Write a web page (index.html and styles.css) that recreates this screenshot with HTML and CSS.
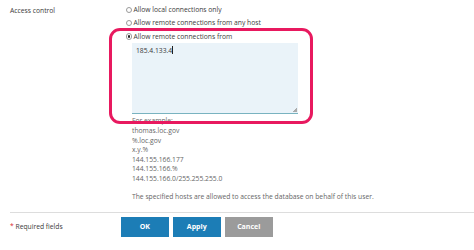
FILE: index.html
```html
<!DOCTYPE html>
<html lang="en">
<head>
  <meta charset="UTF-8" />
  <title>Access control</title>
  <link rel="stylesheet" href="styles.css">
</head>
<body>
  <div class="form">
    <div class="form-row">
      <div class="form-label">Access control</div>
      <div class="form-field">
        <label class="radio"><span class="dot"></span>Allow local connections only</label>
        <label class="radio"><span class="dot"></span>Allow remote connections from any host</label>
        <label class="radio"><span class="dot checked"></span>Allow remote connections from</label>
        <div class="hosts">
          <div class="textarea">185.4.133.4<span class="caret"></span><span class="grip"></span></div>
          <div class="hint">
            <p class="example-title">For example:</p>
            <p>thomas.loc.gov</p>
            <p>%.loc.gov</p>
            <p>x.y.%</p>
            <p>144.155.166.177</p>
            <p>144.155.166.%</p>
            <p>144.155.166.0/255.255.255.0</p>
          </div>
          <p class="note">The specified hosts are allowed to access the database on behalf of this user.</p>
        </div>
        <div class="highlight"></div>
      </div>
    </div>

    <div class="form-footer">
      <div class="required"><span class="star">*</span> Required fields</div>
      <div class="buttons">
        <button class="btn btn-primary">OK</button>
        <button class="btn btn-primary">Apply</button>
        <button class="btn btn-cancel">Cancel</button>
      </div>
    </div>
  </div>
</body>
</html>
```

FILE: styles.css
```css
* {
  margin: 0;
  padding: 0;
  box-sizing: border-box;
}

body {
  font-family: 'Open Sans', 'Liberation Sans', sans-serif;
  font-size: 6.75px;
  color: #3a3a3a;
  background: #fff;
  width: 474px;
  height: 250px;
  overflow: hidden;
}

.form {
  padding: 3.5px 0 0 10px;
}

/* Linha do formulario */
.form-row {
  display: grid;
  grid-template-columns: 112px 1fr;
}

.form-label {
  line-height: 13px;
}

.form-field {
  position: relative;
}

.radio {
  display: flex;
  align-items: center;
  gap: 1.5px;
  height: 13px;
  line-height: 10px;
}

.radio:nth-child(3) {
  position: relative;
  top: 0.5px;
}

.dot {
  width: 6.5px;
  height: 6.5px;
  margin-left: 3.5px;
  border: 1px solid #9a9a9a;
  border-radius: 50%;
  background: #fff;
  position: relative;
}

.dot.checked::after {
  content: '';
  position: absolute;
  left: 1.1px;
  top: 1.1px;
  width: 2.3px;
  height: 2.3px;
  border-radius: 50%;
  background: #222;
}

.hosts {
  padding-left: 10px;
}

.textarea {
  width: 166px;
  height: 71px;
  background: #eaf3f9;
  border-bottom: 1px solid #79b3c0;
  padding: 3px 4px;
  line-height: 10px;
  position: relative;
}

.caret {
  display: inline-block;
  width: 1px;
  height: 8px;
  background: #222;
  vertical-align: -1px;
}

.grip {
  position: absolute;
  right: 1px;
  bottom: 1px;
  width: 5px;
  height: 5px;
  background: linear-gradient(135deg, transparent 50%, #aaa 50%);
}

.hint {
  margin-top: 2px;
  color: #666;
}

.hint p {
  line-height: 9.6px;
}

.hint .example-title {
  margin-bottom: 1px;
}

.note {
  margin-top: 8.3px;
  color: #666;
  line-height: 10px;
}

/* Destaque */
.highlight {
  position: absolute;
  left: -13px;
  top: 24.5px;
  width: 204px;
  height: 95.5px;
  border: 3.5px solid #e8195f;
  border-radius: 11px;
}

/* Rodape */
.form-footer {
  margin-top: 10px;
  border-top: 1px solid #ddd;
  display: grid;
  grid-template-columns: 111px 1fr;
}

.required {
  line-height: 10px;
  padding-top: 9px;
}

.star {
  color: #d9232e;
}

.buttons {
  display: flex;
  gap: 4.5px;
  padding-top: 4px;
}

.btn {
  width: 47.5px;
  height: 20px;
  border: none;
  font-family: 'Open Sans', 'Liberation Sans', sans-serif;
  font-size: 7px;
  font-weight: 700;
  color: #fff;
  cursor: pointer;
}

.btn-primary {
  background: #1c7db6;
}

.btn-cancel {
  background: #9b9b9b;
}
```
